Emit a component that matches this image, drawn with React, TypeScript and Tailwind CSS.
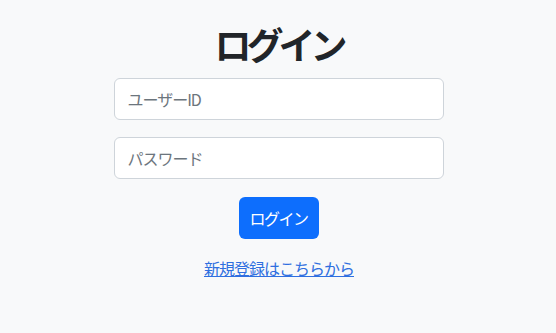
import React from "react";

export default function App() {
  return (
    <div
      className="min-h-[333px] w-full bg-[#f8f9fa] flex flex-col items-center pt-[18px] pl-[1px]"
      style={{ fontFamily: '"Noto Sans CJK JP", "Noto Sans", sans-serif' }}
    >
      <h1 className="text-[37px] leading-[52px] font-bold text-[#212529] tracking-[-5px] mb-[8px]">
        ログイン
      </h1>
      <form className="w-[330px] flex flex-col">
        <input
          type="text"
          placeholder="ユーザーID"
          className="h-[42px] w-full rounded-[6px] border border-[#ced4da] bg-white px-[13px] text-[16px] text-[#212529] placeholder:text-[#6c757d] outline-none tracking-[-1px]"
        />
        <input
          type="password"
          placeholder="パスワード"
          className="mt-[17px] h-[42px] w-full rounded-[6px] border border-[#ced4da] bg-white px-[13px] text-[16px] text-[#212529] placeholder:text-[#6c757d] outline-none tracking-[-1px]"
        />
        <div className="flex justify-center mt-[18px]">
          <button
            type="button"
            className="h-[42px] w-[80px] rounded-[6px] bg-[#0d6efd] text-white text-[16px] tracking-[-1.5px]"
          >
            ログイン
          </button>
        </div>
        <div className="flex justify-center mt-[17px] pl-[1px]">
          <a href="#" className="text-[16px] text-[#2f6fe0] underline tracking-[-1px]">
            新規登録はこちらから
          </a>
        </div>
      </form>
    </div>
  );
}
